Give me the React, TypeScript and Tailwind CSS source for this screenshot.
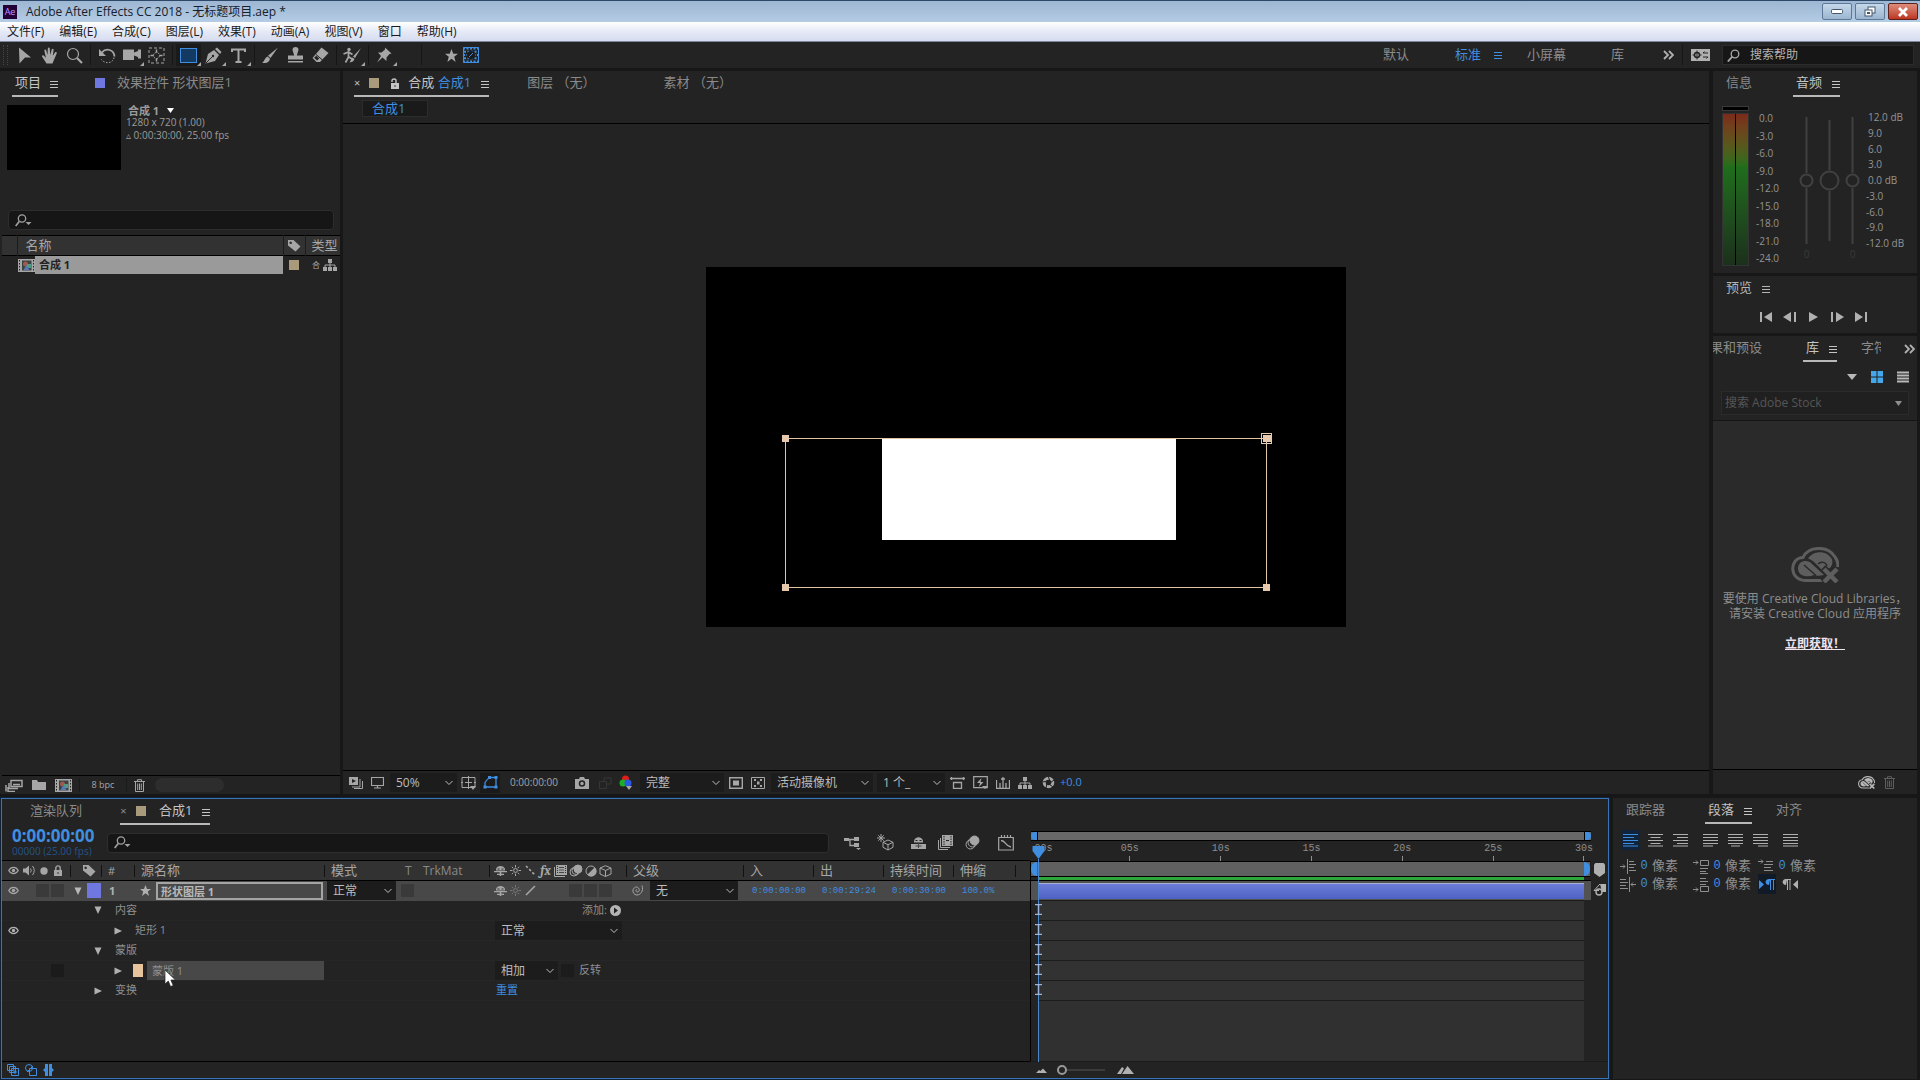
import { ReactNode, useState } from 'react';
import { clsx } from 'clsx';

const menus = ['文件(F)', '编辑(E)', '合成(C)', '图层(L)', '效果(T)', '动画(A)', '视图(V)', '窗口', '帮助(H)'];
const meterMarks = ['0.0', '-3.0', '-6.0', '-9.0', '-12.0', '-15.0', '-18.0', '-21.0', '-24.0'];
const gainMarks = ['12.0 dB', '9.0', '6.0', '3.0', '0.0 dB', '-3.0', '-6.0', '-9.0', '-12.0 dB'];
const ruler = ['00s', '05s', '10s', '15s', '20s', '25s', '30s'];

type SvgProps = { w?: number; h?: number; className?: string; children: ReactNode };

function Svg({ w = 16, h = 16, className, children }: SvgProps) {
  return (
    <svg
      width={w}
      height={h}
      viewBox={`0 0 ${w} ${h}`}
      fill="none"
      stroke="currentColor"
      className={clsx('shrink-0', className)}
      aria-hidden="true"
    >
      {children}
    </svg>
  );
}

const Fill = ({ d }: { d: string }) => <path d={d} fill="currentColor" stroke="none" />;

const MenuLines = ({ className }: { className?: string }) => (
  <Svg w={8} h={9} className={className}>
    <path d="M0 1.500h8M0 4.500h8M0 7.500h8" />
  </Svg>
);
const Chevron = () => (
  <Svg w={8} h={6}>
    <path d="M0.500 1l3.500 3.500L7.500 1" />
  </Svg>
);
const DoubleChevron = () => (
  <Svg w={11} h={10}>
    <path d="M1 1l4 4-4 4M6 1l4 4-4 4" strokeWidth="1.800" />
  </Svg>
);
const Search = () => (
  <Svg w={17} h={13}>
    <circle cx="7" cy="4.500" r="3.700" strokeWidth="1.300" />
    <path d="M4.400 7.200L0.700 12" strokeWidth="1.700" />
    <Fill d="M10.500 8h6l-3 3z" />
  </Svg>
);
const Eye = () => (
  <Svg w={11} h={9}>
    <path d="M0.800 4.500C3 0.300 8 0.300 10.200 4.500C8 8.700 3 8.700 0.800 4.500z" strokeWidth="1.300" />
    <circle cx="5.500" cy="4.500" r="1.700" fill="currentColor" stroke="none" />
  </Svg>
);
const Tag = () => (
  <Svg w={14} h={13}>
    <Fill d="M1 1h5.500L13.500 7.500L8.500 12.500L1 6.500zM3.600 2.500a1.300 1.300 0 1 0 0.100 0z" />
  </Svg>
);
const Flow = () => (
  <Svg w={14} h={12}>
    <Fill d="M5 0h4v4H5zM0 8h4v4H0zM5 8h4v4H5zM10 8h4v4h-4z" />
    <path d="M7 4v4M2 8V6h10v2" />
  </Svg>
);
const Trash = () => (
  <Svg w={11} h={13}>
    <path d="M0 2.500h11M3.500 2.500V0.700h4v1.800M1.500 3v9.500h8V3M3.700 4.500v6.500M5.500 4.500v6.500M7.300 4.500v6.500" />
  </Svg>
);
const Shy = () => (
  <Svg w={13} h={11}>
    <Fill d="M2 5.500V4C3 0 10 0 11 4v1.500zM0 6h13v1.300H0zM5.700 7h1.600v4H5.700zM3 8.700h7V10H3z" />
    <path d="M3.500 4h2M7.500 4h2" stroke="#333" />
  </Svg>
);
const Sun = () => (
  <Svg w={11} h={11}>
    <circle cx="5.500" cy="5.500" r="1.900" />
    <path d="M5.500 0v2.500M5.500 8.500V11M0 5.500h2.500M8.500 5.500H11M1.800 1.800l1.500 1.500M7.700 7.700l1.500 1.500M9.200 1.800L7.700 3.300M3.300 7.700L1.800 9.200" />
  </Svg>
);
const Film = () => (
  <Svg w={13} h={12}>
    <path d="M0.500 2v9.500H11" />
    <Fill d="M2 0h11v10H2z" />
    <path d="M3.500 1v8M11.500 1v8" stroke="#333" strokeDasharray="1 1" />
    <path d="M5 2.500h5M5 7.500h5" stroke="#444" />
    <path d="M5 5h5" stroke="#555" />
  </Svg>
);
const Blur = () => (
  <Svg w={14} h={13}>
    <circle cx="5" cy="8" r="4" />
    <circle cx="7" cy="6.500" r="4" />
    <circle cx="9" cy="5" r="4" fill="currentColor" />
  </Svg>
);
const Half = () => (
  <Svg w={12} h={12}>
    <circle cx="6" cy="6" r="5" />
    <Fill d="M9.500 2.500A5 5 0 1 1 2.500 9.500z" />
  </Svg>
);
const Cube = () => (
  <Svg w={13} h={12}>
    <path d="M6.500 0.700L12 3v6l-5.500 2.500L1 9V3zM1 3l5.500 2.500L12 3M6.500 5.500v6" />
  </Svg>
);
const Star = ({ size = 11 }: { size?: number }) => (
  <svg width={size} height={size} viewBox="0 0 11 11" className="shrink-0" fill="currentColor" aria-hidden="true">
    <path d="M5.500 0l1.500 4h4L7.800 6.500L9 11L5.500 8.200L2 11l1.200-4.500L0 4h4z" />
  </svg>
);
const Lock = ({ open }: { open?: boolean }) => (
  <Svg w={10} h={11}>
    <Fill d="M1 5h8v6H1z" />
    <path d={open ? 'M2 4V2.500c0-2 4-2 4 0V5' : 'M2.800 5V3c0-2.800 4.400-2.800 4.400 0v2'} strokeWidth="1.400" />
    <path d="M5 7v2" stroke="#333" />
  </Svg>
);
const CompIcon = () => (
  <Svg w={17} h={13}>
    <Fill d="M0 0h17v13H0z" />
    <path d="M1.500 1v11M15.500 1v11" stroke="#232323" strokeDasharray="1.500 1.500" />
    <path d="M4 1.500h9.500v10H4z" fill="#3c4244" stroke="none" />
    <circle cx="7.500" cy="5" r="2.500" fill="#a05a4c" stroke="none" />
    <path d="M9 5h4v4H9z" fill="#4f9a82" stroke="none" />
    <path d="M5.500 11l3-5l3 5z" fill="#5878b8" stroke="none" />
  </Svg>
);
const CreativeCloud = ({ w = 48, h = 36 }: { w?: number; h?: number }) => (
  <svg width={w} height={h} viewBox="0 0 48 36" fill="none" stroke="currentColor" aria-hidden="true">
    <path d="M31 33.500H14C-2 33-2 11 12 10.500C17-1 37-2 44 10c3 4 3 8 2.500 10" strokeWidth="3" />
    <path d="M7 21.500c0-8 10-9.500 14-4.500L33 28c-4 1-8 1-10 0c-7 3-16 1-16-6.500z" fill="currentColor" stroke="none" />
    <path d="M17 11.500c6-9 20-8 24 1c1 3 0 7-3 9l-4-3l-4 5l-8-8.500c-2-2-3-3-5-3.500z" fill="currentColor" stroke="none" />
    <path d="M13 18l12 10.500" stroke="#2a2a2a" strokeWidth="1.500" />
    <path d="M17 13c3 0 5 2 7 4l8 8M27 17c3-3 8-2 9 2" stroke="#2a2a2a" strokeWidth="1.500" />
    <path d="M32 21l14 14M46 21L32 35" stroke="#2a2a2a" strokeWidth="7" />
    <path d="M33 22l13 13M46 22L33 35" strokeWidth="4.500" />
  </svg>
);
const Twirl = ({ open }: { open?: boolean }) => (
  <Svg w={8} h={8}>
    <Fill d={open ? 'M0.500 0.500h7L4 8z' : 'M0.500 0.500L8 4L0.500 7.500z'} />
  </Svg>
);

function IconButton({ label, className, children }: { label: string; className?: string; children: ReactNode }) {
  return (
    <button aria-label={label} title={label} className={clsx('flex shrink-0 items-center justify-center', className)}>
      {children}
    </button>
  );
}

function Tab({ active, className, children }: { active?: boolean; className?: string; children: ReactNode }) {
  return (
    <button
      className={clsx(
        'flex h-[26px] shrink-0 items-center border-b-2 whitespace-nowrap text-[13px]',
        active ? 'border-[#b8b8b8] text-[#c4c4c4]' : 'border-transparent text-[#8a8a8a]',
        className,
      )}
    >
      {children}
    </button>
  );
}

function Select({ label, value, className }: { label: string; value: string; className?: string }) {
  return (
    <span className={clsx('relative flex h-[19px] items-center bg-[#1c1c1c] text-[#bdbdbd]', className)}>
      <select aria-label={label} defaultValue={value} className="h-full w-full appearance-none bg-transparent pl-[6px] text-[12px] outline-none">
        <option>{value}</option>
      </select>
      <span className="pointer-events-none absolute right-1">
        <Chevron />
      </span>
    </span>
  );
}

const toolGroups: { name: string; icon: ReactNode; more?: boolean; active?: boolean }[][] = [
  [
    { name: '选取工具', icon: <Svg w={17} h={17}><Fill d="M3 0.500l12 10H9L3.500 16.500z" /></Svg> },
    {
      name: '手形工具',
      icon: (
        <Svg w={17} h={17}>
          <Fill d="M5.500 16.500L1 9.500c0-1.500 1.500-1.500 2.300-0.500L5 11L3.300 3.500c0-1.400 1.500-1.500 1.900-0.200L6.500 8L6.800 1.500c0.200-1.300 1.800-1.300 2 0L9.200 8l1.500-5.500c0.500-1.200 2-0.800 1.900 0.400L11.800 8.800l2.200-3.300c0.800-1 2.200-0.200 1.700 1L12.500 14l-1 2.500z" />
        </Svg>
      ),
    },
    { name: '缩放工具', icon: <Svg w={17} h={17}><circle cx="7" cy="7" r="5.500" strokeWidth="1.200" /><path d="M11 11l5 5" strokeWidth="2.200" /></Svg> },
  ],
  [
    {
      name: '旋转工具',
      icon: (
        <Svg w={18} h={17}>
          <path d="M4 5.500c4-5 12-3 12.500 4" strokeWidth="1.800" />
          <path d="M16 10.500c-1 6-9 7-12.500 2" strokeDasharray="1.500 1.500" />
          <Fill d="M1 2v7h7z" />
        </Svg>
      ),
    },
    { name: '摄像机工具', more: true, icon: <Svg w={18} h={14}><Fill d="M0 1.500h11v3l4-1.500V1.500h3v9h-3V9l-4-1.500V12H0z" /></Svg> },
    {
      name: '锚点工具',
      icon: (
        <Svg w={17} h={17}>
          <rect x="1" y="1" width="15" height="15" strokeDasharray="3 2" />
          <circle cx="8.500" cy="8.500" r="3" strokeDasharray="2 1" />
          <path d="M8.500 2.500v3M8.500 11.500v3M2.500 8.500h3M11.500 8.500h3" strokeWidth="1.500" />
        </Svg>
      ),
    },
  ],
  [
    { name: '矩形工具', more: true, active: true, icon: <Svg w={17} h={15}><rect x="0.500" y="0.500" width="16" height="14" fill="#133a63" stroke="#3f8ee0" /></Svg> },
    {
      name: '钢笔工具',
      more: true,
      icon: (
        <Svg w={17} h={17}>
          <Fill d="M0.500 16.500L3 7l6-4l5 5l-4 6z" />
          <Fill d="M10 2l2-1.500l4.500 4.500L15 7z" />
          <path d="M1 16l6-6" stroke="#232323" />
          <circle cx="8" cy="9" r="1.200" fill="#232323" stroke="none" />
        </Svg>
      ),
    },
    { name: '文字工具', more: true, icon: <Svg w={15} h={15}><path d="M1 4V1.500h13V4M7.500 1.500V14M4.500 14h6" strokeWidth="2" /></Svg> },
  ],
  [
    { name: '画笔工具', icon: <Svg w={17} h={17}><Fill d="M16 0.500L8.500 11L6 8.800z" /><Fill d="M5.500 9.500l2.500 2.200c-1 4-4 4.500-8 4.300c2-1 2.500-5 5.500-6.500z" /></Svg> },
    { name: '仿制图章工具', icon: <Svg w={17} h={16}><Fill d="M5.500 3a3 3 0 0 1 6 0L9.800 8.500H16v4H1v-4h6.200zM1 14h15v1.500H1z" /></Svg> },
    { name: '橡皮擦工具', icon: <Svg w={17} h={17}><Fill d="M9.500 0.500l7 5.500L8 15H4.500L0.500 11z" /><path d="M4 7.500l6.500 5.500" stroke="#232323" /><path d="M2.200 10.800l3 2.800l2-2.200l-3-2.700z" fill="#232323" stroke="none" /></Svg> },
  ],
  [
    {
      name: 'Roto 笔刷工具',
      more: true,
      icon: (
        <Svg w={19} h={17}>
          <circle cx="6" cy="2.500" r="1.700" fill="currentColor" stroke="none" />
          <path d="M0.500 7l5-2l4 2.500M5.500 5v5l-3 5.500M6 10l3 2" strokeWidth="1.700" />
          <Fill d="M18 1L12 11l-2-1.500zM9.500 10.500l2 1.500c-1 3-3 3.500-5 3.200c1.200-1 1.500-3.500 3-4.700z" />
        </Svg>
      ),
    },
  ],
  [{ name: '操控点工具', more: true, icon: <Svg w={17} h={17}><Fill d="M9 0.500l6.500 6l-2 0.500l-3 3.500V14L6.500 10.500L1 15.500L5 9L2 5.500h3.500L9 2.500z" /></Svg> }],
];

function Toolbar() {
  return (
    <div className="flex h-[26px] shrink-0 items-center bg-[#232323] text-[#a6a6a6]">
      <span className="ml-[3px] mr-1 h-5 w-[5px] border-x border-dotted border-[#444]" />
      {toolGroups.map((group, i) => (
        <div key={i} className="flex items-center">
          {i > 0 ? <span className="mx-[3px] h-5 w-px bg-[#161616]" /> : null}
          {group.map((tool) => (
            <IconButton key={tool.name} label={tool.name} className={clsx('relative h-[22px] w-[25px]', tool.active && 'bg-[#1a1a1a]')}>
              {tool.icon}
              {tool.more ? <span className="absolute right-0 bottom-0"><Svg w={4} h={4}><Fill d="M4 0v4H0z" /></Svg></span> : null}
            </IconButton>
          ))}
        </div>
      ))}
      <span className="ml-[24px] h-5 w-px bg-[#161616]" />
      <IconButton label="形状" className="ml-[22px] w-[14px]"><Star size={13} /></IconButton>
      <IconButton label="蒙版" className="ml-[5px] text-[#3f8ee0]">
        <Svg w={16} h={16}>
          <path d="M0 1.500h16M0 8h16M0 14.500h16" strokeWidth="2" strokeDasharray="2 1.500" />
          <path d="M1 4.800h14M1 11.300h14" strokeWidth="2" strokeDasharray="2 1.500" />
          <path d="M0.500 0.500h15v15H0.500z" />
          <circle cx="8" cy="8" r="4" fill="#1b1b1b" stroke="none" />
          <path d="M6 10l4-4" />
        </Svg>
      </IconButton>
      <div className="ml-auto flex items-center text-[13px] text-[#8c8c8c]">
        <button className="w-[72px] text-left">默认</button>
        <button className="flex w-[72px] items-center gap-[13px] text-[#3f8ee0]">标准<MenuLines /></button>
        <button className="w-[84px] text-left">小屏幕</button>
        <button className="w-[52px] text-left">库</button>
        <IconButton label="更多工作区" className="text-[#b0b0b0]"><DoubleChevron /></IconButton>
        <span className="mx-2 h-5 w-px bg-[#161616]" />
        <IconButton label="同步设置" className="text-[#b0b0b0]">
          <Svg w={19} h={12}>
            <Fill d="M0 0h19v12H0z" />
            <circle cx="6" cy="6" r="2.500" stroke="#232323" strokeWidth="1.500" />
            <path d="M6 1.500v9M1.500 6h2M8.500 6h2M12 4h5M12 8h5M13.500 2.500L12 4M15.500 9.500L17 8" stroke="#232323" />
          </Svg>
        </IconButton>
        <label className="mr-[6px] ml-[12px] flex h-5 w-[192px] items-center gap-[10px] border border-[#2c2c2c] bg-[#161616] pl-1 text-[#a8a8a8]">
          <Svg w={13} h={13}>
            <circle cx="8" cy="5" r="3.800" strokeWidth="1.300" />
            <path d="M5.300 7.700L0.800 12.500" strokeWidth="1.800" />
          </Svg>
          <input placeholder="搜索帮助" className="w-full bg-transparent text-[12px] outline-none placeholder:text-[#b4b4b4]" />
        </label>
      </div>
    </div>
  );
}

function ProjectPanel() {
  return (
    <section className="flex w-[340px] shrink-0 flex-col bg-[#232323] pl-[2px]">
      <div className="flex pl-[10px]">
        <Tab active className="gap-[9px] pl-[3px]">项目<MenuLines className="mt-[3px]" /></Tab>
        <Tab className="ml-[37px] gap-3"><span className="h-[10px] w-[10px] bg-[#6e78e0]" />效果控件 形状图层1</Tab>
      </div>
      <div className="mt-2 flex gap-[5px] pl-[5px] text-[10px] leading-[13px] text-[#9c9c9c]">
        <div className="h-[65px] w-[114px] bg-black" />
        <div>
          <p className="flex items-center gap-2 pl-[2px] text-[11px] leading-[11px] font-bold">合成 1<Svg w={7} h={5} className="text-white"><Fill d="M0 0h7L3.500 5z" /></Svg></p>
          <p>1280 x 720 (1.00)</p>
          <p>▵ 0:00:30:00, 25.00 fps</p>
        </div>
      </div>
      <label className="mx-[6px] mt-10 flex h-5 items-center rounded-sm border border-[#2e2e2e] bg-[#161616] pl-[6px] text-[#a0a0a0]">
        <Search />
        <input aria-label="搜索项目" className="w-full bg-transparent px-1 text-[12px] outline-none" />
      </label>
      <table className="mt-[5px] w-full table-fixed border-collapse text-[13px] text-[#a6a6a6]">
        <colgroup><col className="w-[15px]" /><col /><col className="w-[22px]" /><col className="w-[35px]" /></colgroup>
        <thead>
          <tr className="h-5 border-y border-black bg-[#323232]">
            <th className="p-0" />
            <th className="border-l border-[#1c1c1c] p-0 pl-[8px] text-left leading-[17px] font-normal">名称</th>
            <th className="border-x border-[#1c1c1c] p-0"><span className="flex justify-center"><Tag /></span></th>
            <th className="p-0 pl-[6px] text-left leading-[17px] font-normal whitespace-nowrap">类型</th>
          </tr>
        </thead>
        <tbody>
          <tr className="h-[19px]">
            <td className="p-0" />
            <td className="p-0">
              <span className="flex items-center pl-px">
                <CompIcon />
                <span className="flex-1 bg-[#9a9a9a] pl-1 text-[11px] leading-[18px] font-bold text-[#222]">合成 1</span>
              </span>
            </td>
            <td className="p-0"><span className="mx-auto block h-[10px] w-[10px] bg-[#a89a7a]" /></td>
            <td className="p-0">
              <span className="flex items-center justify-end gap-[3px] pr-[3px]">
                <span className="text-[8px] leading-[16px]">合</span>
                <Flow />
              </span>
            </td>
          </tr>
        </tbody>
      </table>
      <div className="mt-auto flex h-[19px] items-center border-t border-black pl-[3px] text-[#a6a6a6]">
        <IconButton label="解释素材"><Svg w={18} h={13}><path d="M6 1.500h11v6H6zM8 5.500h7M4 4v5.500h9M1 6v6.500M3 8v4.500h7" strokeWidth="1.500" /></Svg></IconButton>
        <IconButton label="新建文件夹" className="ml-[9px]"><Svg w={14} h={12}><Fill d="M0 1h5l1 2h8v8H0z" /></Svg></IconButton>
        <IconButton label="新建合成" className="ml-[9px]"><CompIcon /></IconButton>
        <button className="mx-[7px] w-[48px] border-x border-[#1a1a1a] text-center text-[9px] leading-[14px]">8 bpc</button>
        <IconButton label="删除"><Trash /></IconButton>
        <span className="ml-[10px] h-[14px] w-[69px] rounded-full bg-[#2d2d2d]" />
      </div>
    </section>
  );
}

function Composition() {
  return (
    <svg width="640" height="360" viewBox="0 0 640 360" fill="none" role="img" aria-label="合成 1">
      <rect width="640" height="360" fill="#000" />
      <rect x="176" y="172" width="294" height="101" fill="#fff" />
      <rect x="79.500" y="171.500" width="481" height="149" stroke="#e0c4a4" />
      <path d="M76 168h7v7h-7zM76 317h7v7h-7zM557 317h7v7h-7zM557 168h8v7h-8z" fill="#e6c8ac" />
      <rect x="555.500" y="166.500" width="10" height="10" stroke="#e6c8ac" />
    </svg>
  );
}

function Viewer() {
  return (
    <section className="flex min-w-0 flex-1 flex-col bg-[#232323]">
      <div className="flex pl-[11px]">
        <Tab active className="text-[#8f8f8f]">
          <span className="text-[11px]">×</span>
          <span className="mr-[11px] ml-[9px] h-[10px] w-[10px] bg-[#a89a7a]" />
          <Lock open />
          <span className="ml-[8px]">合成 <span className="text-[#3f8ee0]">合成1</span></span>
          <MenuLines className="mt-[3px] ml-[10px]" />
        </Tab>
        <Tab className="ml-[38px]">图层 （无）</Tab>
        <Tab className="ml-[68px]">素材 （无）</Tab>
      </div>
      <div className="flex h-[27px] items-center border-b border-black pl-[19px]">
        <button className="mb-1 h-[17px] w-[66px] border border-[#2c2c2c] bg-[#1a1a1a] pl-[9px] text-left text-[13px] leading-[15px] text-[#3f8ee0]">合成1</button>
      </div>
      <div className="flex flex-1 items-center justify-center">
        <Composition />
      </div>
      <div className="flex h-6 shrink-0 items-center border-t border-black pl-[6px] text-[#a6a6a6]">
        <IconButton label="始终预览此视图"><Svg w={14} h={12}><Fill d="M0 0h9v8H0z" /><path d="M11 2v8H3M13.500 4v7.500H5" /><path d="M3 2l4 2-4 2z" fill="#222" stroke="none" /></Svg></IconButton>
        <IconButton label="主查看器" className="ml-2"><Svg w={13} h={12}><path d="M0.500 0.500h12v8H0.500zM3 11h7M6.500 9v2" strokeWidth="1.200" /></Svg></IconButton>
        <Select label="放大率" value="50%" className="ml-[6px] w-[67px]" />
        <IconButton label="网格和参考线" className="ml-[4px]"><Svg w={15} h={14}><path d="M1 1.500h13v10H1zM7.500 0v13M4 6.500h7M0 6.500h2M13 6.500h2" /><Fill d="M9 10h6l-3 4z" /></Svg></IconButton>
        <IconButton label="切换蒙版和形状路径可见性" className="ml-[4px] h-5 w-[20px] bg-[#1a1a1a] text-[#3f8ee0]"><Svg w={15} h={13}><path d="M2 11V6.500C3.500 4 5 2.500 7 1.500h6V11z" strokeWidth="1.300" /><Fill d="M0.500 9.500h3v3h-3zM11.500 9.500h3v3h-3zM11.500 0h3v3h-3zM5 0h3v3H5z" /></Svg></IconButton>
        <button className="ml-[10px] w-[60px] text-left text-[10px]">0:00:00:00</button>
        <IconButton label="拍摄快照" className="ml-[5px]"><Svg w={14} h={12}><Fill d="M0 2h4l1-2h4l1 2h4v10H0z" /><circle cx="7" cy="6.500" r="2.500" stroke="#232323" strokeWidth="1.500" /></Svg></IconButton>
        <IconButton label="显示快照" className="ml-[10px] text-[#363636]"><Svg w={13} h={12}><path d="M0.500 4.500h7v7h-7zM5 4V1h7v6H8" /></Svg></IconButton>
        <IconButton label="显示通道" className="ml-[7px]">
          <Svg w={14} h={15}>
            <circle cx="6.500" cy="4" r="3.500" fill="#e01c1c" stroke="none" />
            <circle cx="4" cy="8" r="3.500" fill="#1cae24" stroke="none" />
            <circle cx="9" cy="8" r="3.500" fill="#2a58e0" stroke="none" />
            <Fill d="M7 11h6l-3 4z" />
          </Svg>
        </IconButton>
        <Select label="分辨率" value="完整" className="ml-[7px] w-[84px]" />
        <IconButton label="目标区域" className="ml-[5px]"><Svg w={14} h={12}><path d="M0.700 0.700h12.600v10.600H0.700z" strokeWidth="1.400" /><Fill d="M4 3.500h6v5H4z" /></Svg></IconButton>
        <IconButton label="切换透明网格" className="ml-2"><Svg w={14} h={12}><path d="M0.500 0.500h13v11H0.500z" /><path d="M3 3h9M3 9h9" strokeWidth="2" strokeDasharray="2 4" /><path d="M6 6h6" strokeWidth="3" strokeDasharray="2.500 5" /></Svg></IconButton>
        <Select label="3D 视图" value="活动摄像机" className="ml-[6px] w-[102px]" />
        <Select label="视图布局" value="1 个_" className="ml-1 w-[68px]" />
        <div className="flex items-center gap-[8px] pl-[5px]">
          <IconButton label="像素长宽比校正"><Svg w={15} h={12}><path d="M0 1.500h15M3.500 5.500h8v6h-8zM1.500 0v3M13.500 0v3" strokeWidth="1.300" /></Svg></IconButton>
          <IconButton label="快速预览"><Svg w={15} h={13}><path d="M0.700 0.700h13.600v11H0.700z" strokeWidth="1.200" /><Fill d="M8.500 2L4 7h3l-1 4l4.500-5h-3zM9 10h6l-3 3z" /></Svg></IconButton>
          <IconButton label="时间轴"><Svg w={14} h={12}><path d="M0.500 3v8.500h13V3M4 6v5M10 6v5M7 0v11M5 2h4" strokeWidth="1.300" /></Svg></IconButton>
          <IconButton label="合成流程图"><Flow /></IconButton>
        </div>
        <IconButton label="重置曝光度" className="ml-[10px]"><Svg w={13} h={13}><circle cx="6.500" cy="6.500" r="4.300" strokeWidth="3" /><path d="M6 0l2 5M12 4L8 7M11 11L7 8M4 12l1-5M1 6l4-1" stroke="#232323" /></Svg></IconButton>
        <button className="ml-[5px] text-[11px] text-[#3f8ee0]">+0.0</button>
      </div>
    </section>
  );
}

function GainSlider({ size }: { size: 'sm' | 'lg' }) {
  return (
    <Svg w={21} h={127} className="text-[#414141]">
      {size === 'lg' ? (
        <>
          <path d="M10.500 3v50M10.500 74v50" strokeWidth="2" />
          <circle cx="10.500" cy="63.500" r="9" strokeWidth="2" />
        </>
      ) : (
        <>
          <path d="M10.500 0v56M10.500 71v56" strokeWidth="2" />
          <circle cx="10.500" cy="63.500" r="6" strokeWidth="2" />
        </>
      )}
    </Svg>
  );
}

function AudioPanel() {
  return (
    <section className="h-[202px] shrink-0 bg-[#232323]">
      <div className="flex pl-[13px]">
        <Tab>信息</Tab>
        <Tab active className="ml-[41px] gap-[10px] pl-[3px]">音频<MenuLines className="mt-[3px]" /></Tab>
      </div>
      <div className="mt-[9px] flex pl-[9px] text-[10px] text-[#949494]">
        <div className="w-[27px]">
          <div className="h-[5px] border border-[#3a3a3a] bg-black" />
          <div className="mt-[2px] flex h-[153px] justify-center border border-[#333] bg-linear-to-b from-[#7c2a1c] via-[#1f6e1c] via-35% to-[#1b301b]">
            <div className="w-px bg-black" />
          </div>
        </div>
        <div className="mt-[5px] ml-[7px] flex h-[154px] w-[24px] flex-col justify-between leading-[14px]">
          {meterMarks.map((m) => <span key={m} className={m === '0.0' ? 'pl-[3px]' : ''}>{m}</span>)}
        </div>
        <div className="mt-[11px] ml-[16px] flex gap-[2px]">
          {(['sm', 'lg', 'sm'] as const).map((size, i) => (
            <div key={i} className="text-center text-[10px] leading-[20px] text-[#3a3a3a]">
              <GainSlider size={size} />
              {size === 'sm' ? '0' : null}
            </div>
          ))}
        </div>
        <div className="mt-1 flex h-[140px] flex-col justify-between leading-[14px] whitespace-nowrap">
          {gainMarks.map((m) => <span key={m} className={clsx('pl-[3px]', !m.startsWith('-') && 'ml-[2px]')}>{m}</span>)}
        </div>
      </div>
    </section>
  );
}

function PreviewPanel() {
  return (
    <section className="h-[57px] shrink-0 bg-[#232323] text-[#b0b0b0]">
      <div className="flex pl-[13px]">
        <Tab className="gap-[10px] text-[#b4b4b4]">预览<MenuLines className="mt-[3px]" /></Tab>
      </div>
      <div className="mt-[10px] flex items-center gap-[11px] pl-[47px]">
        <IconButton label="第一个"><Svg w={12} h={10}><Fill d="M0 0h2v10H0zM12 0v10L4 5z" /></Svg></IconButton>
        <IconButton label="上一帧"><Svg w={13} h={10}><Fill d="M8 0v10L0 5zM11 0h2v10h-2z" /></Svg></IconButton>
        <IconButton label="播放"><Svg w={13} h={10}><Fill d="M2 0l9 5l-9 5z" /></Svg></IconButton>
        <IconButton label="下一帧"><Svg w={13} h={10}><Fill d="M5 0v10l8-5zM0 0h2v10H0z" /></Svg></IconButton>
        <IconButton label="最后一个"><Svg w={12} h={10}><Fill d="M10 0h2v10h-2zM0 0v10l8-5z" /></Svg></IconButton>
      </div>
    </section>
  );
}

function LibraryPanel() {
  return (
    <section className="flex min-h-0 flex-1 flex-col bg-[#232323] text-[#8e8e8e]">
      <div className="flex">
        <Tab className="w-[49px] justify-end overflow-hidden">果和预设</Tab>
        <Tab active className="ml-[41px] gap-[10px] pl-[3px]">库<MenuLines className="mt-[3px]" /></Tab>
        <Tab className="ml-[24px] w-[20px] overflow-hidden">字符</Tab>
        <IconButton label="更多面板" className="ml-auto pr-[2px] text-[#b0b0b0]"><DoubleChevron /></IconButton>
      </div>
      <div className="flex h-[29px] items-center justify-end gap-[14px] pr-[8px] text-[#b8b8b8]">
        <IconButton label="选择库"><Svg w={10} h={6}><Fill d="M0 0h10L5 6z" /></Svg></IconButton>
        <IconButton label="图标视图" className="text-[#45a6ea]"><Svg w={12} h={12}><Fill d="M0 0h5.500v5.500H0zM6.500 0H12v5.500H6.500zM0 6.500h5.500V12H0zM6.500 6.500H12V12H6.500z" /></Svg></IconButton>
        <IconButton label="列表视图"><Svg w={12} h={12}><path d="M0 1.500h12M0 4.500h12M0 7.500h12M0 10.500h12" strokeWidth="2" /></Svg></IconButton>
      </div>
      <label className="mx-2 flex h-6 items-center border border-[#2b2b2b] bg-[#202020] pr-[6px] pl-[3px]">
        <input placeholder="搜索 Adobe Stock" className="w-full min-w-0 bg-transparent text-[12px] outline-none placeholder:text-[#565656]" />
        <Svg w={7} h={5}><Fill d="M0 0h7L3.500 5z" /></Svg>
      </label>
      <div className="mt-[5px] flex flex-1 flex-col items-center border-t border-[#151515] bg-[#2a2a2a] pt-[126px]">
        <span className="text-[#5e5e5e]"><CreativeCloud /></span>
        <p className="mt-2 text-center text-[12px] leading-[15px] whitespace-nowrap">要使用 Creative Cloud Libraries，<br />请安装 Creative Cloud 应用程序</p>
        <a href="#get" className="mt-[14px] text-[12px] font-bold text-[#f0e4f0] underline">立即获取！</a>
      </div>
      <div className="flex h-[25px] items-center justify-end gap-[9px] border-t border-black pr-[22px]">
        <IconButton label="Creative Cloud" className="text-[#b8b8b8]"><CreativeCloud w={17} h={13} /></IconButton>
        <IconButton label="删除" className="text-[#5e5e5e]"><Trash /></IconButton>
      </div>
    </section>
  );
}

function Th({ sep, className, children }: { sep?: boolean; className?: string; children?: ReactNode }) {
  return (
    <th className="p-0 font-normal">
      <span className={clsx('flex items-center', className)}>
        {sep ? <span className="mr-[6px] h-3 w-px shrink-0 bg-[#111]" /> : null}
        {children}
      </span>
    </th>
  );
}

const Slot = ({ children }: { children?: ReactNode }) => <span className="flex w-[15px] shrink-0 justify-center">{children}</span>;
const Box = () => <span className="block h-[13px] w-[13px] bg-[#3a3a3a]" />;

type PropRowProps = { name: string; deep?: boolean; open?: boolean; visible?: boolean; mask?: boolean; children?: ReactNode };

function PropRow({ name, deep, open, visible, mask, children }: PropRowProps) {
  return (
    <tr className="h-5 border-b border-[#262626]">
      <td className="p-0">
        <span className="flex items-center pl-[6px]">
          {visible ? <IconButton label="可见性" className="text-[#b0b0b0]"><Eye /></IconButton> : null}
          {mask ? <span className="ml-[43px] h-[13px] w-[13px] bg-[#1b1b1b]" /> : null}
        </span>
      </td>
      <td colSpan={3} className="p-0">
        <span className={clsx('flex items-center', deep ? 'pl-[44px]' : 'pl-[24px]')}>
          <button aria-label={name} className={clsx('shrink-0 text-[#b0b0b0]', mask ? 'w-[19px]' : 'w-[21px]')}><Twirl open={open} /></button>
          {mask ? (
            <>
              <span className="mr-1 h-[13px] w-[10px] bg-[#e8c49c]" />
              <span className="relative flex-1 bg-[#484848] pl-[5px] leading-[19px]">
                {name}
                <svg width="14" height="19" viewBox="0 0 14 19" className="absolute top-2 left-[17px]" aria-hidden="true">
                  <path d="M1 1v14l3.300-3l2.300 5.500l2.600-1l-2.300-5.500h4.600z" fill="#fff" stroke="#222" strokeWidth="0.700" />
                </svg>
              </span>
            </>
          ) : name}
        </span>
      </td>
      <td colSpan={3} className="p-0" />
      <td className="p-0">{children}</td>
      <td colSpan={6} className="p-0" />
    </tr>
  );
}

function LayerTable() {
  const [layerName, setLayerName] = useState('形状图层 1');

  return (
    <table className="w-full table-fixed border-collapse text-[11px] text-[#8f8f8f]">
      <colgroup>
        <col className="w-[68px]" />
        <col className="w-[31px]" />
        <col className="w-[33px]" />
        <col className="w-[190px]" />
        <col className="w-[75px]" />
        <col className="w-[20px]" />
        <col className="w-[70px]" />
        <col className="w-[137px]" />
        <col className="w-[117px]" />
        <col className="w-[70px]" />
        <col className="w-[70px]" />
        <col className="w-[70px]" />
        <col className="w-[62px]" />
        <col />
      </colgroup>
      <thead>
        <tr className="h-5 border-y border-black bg-[#323232] text-[13px] leading-[17px] text-[#a6a6a6]">
          <Th className="gap-1 pl-[6px]">
            <Eye />
            <Svg w={12} h={11}><Fill d="M0 3.500h2.500L6 0.500v10L2.500 7.500H0z" /><path d="M7.500 3.500q1.500 2 0 4M9.500 1q3.500 4.500 0 9" /></Svg>
            <Svg w={10} h={10}><circle cx="5" cy="5" r="3.700" fill="currentColor" stroke="none" /></Svg>
            <Lock />
          </Th>
          <Th sep><span className="pl-[5px]"><Tag /></span></Th>
          <Th sep className="text-[11px]">#</Th>
          <Th sep>源名称</Th>
          <Th sep>模式</Th>
          <Th className="pl-[6px] text-[12px] text-[#8a8a8a]">T</Th>
          <Th className="pl-1 text-[12px] text-[#8a8a8a]">TrkMat</Th>
          <th className="p-0">
            <span className="flex items-center">
              <span className="mr-[3px] h-3 w-px bg-[#111]" />
              <Slot><Shy /></Slot>
              <Slot><Sun /></Slot>
              <Slot><Svg w={11} h={11}><path d="M1 1l9 9" strokeWidth="1.600" strokeDasharray="2.500 2" /></Svg></Slot>
              <Slot><em className="font-serif text-[13px] leading-[12px]">fx</em></Slot>
              <Slot><Film /></Slot>
              <Slot><Blur /></Slot>
              <Slot><Half /></Slot>
              <Slot><Cube /></Slot>
            </span>
          </th>
          <Th sep>父级</Th>
          <Th sep>入</Th>
          <Th sep>出</Th>
          <Th sep>持续时间</Th>
          <Th sep>伸缩</Th>
          <Th sep />
        </tr>
      </thead>
      <tbody>
        <tr className="h-5 bg-[#484848]">
          <td className="p-0">
            <span className="flex items-center pl-[6px] text-[#a6a6a6]">
              <IconButton label="可见性"><Eye /></IconButton>
              <span className="mr-[2px] ml-[17px]"><Box /></span>
              <Box />
            </span>
          </td>
          <td className="p-0">
            <span className="flex items-center gap-[5px] pl-1 text-[#b8b8b8]"><Twirl open /><span className="h-[15px] w-[15px] bg-[#6e78e0]" /></span>
          </td>
          <td className="p-0 pl-[8px] font-bold text-[#b0b0b0]">1</td>
          <td className="p-0">
            <span className="flex items-center gap-[5px] pr-px pl-[6px] text-[#b0b0b0]">
              <Star />
              <input
                aria-label="图层名称"
                value={layerName}
                onChange={(e) => setLayerName(e.target.value)}
                className="h-[18px] min-w-0 flex-1 border-2 border-[#a4a4a4] bg-transparent pl-[3px] text-[11px] font-bold text-[#b8b8b8] outline-none"
              />
            </span>
          </td>
          <td className="p-0 px-[3px]"><Select label="混合模式" value="正常" /></td>
          <td className="p-0 pl-[2px]"><Box /></td>
          <td className="p-0" />
          <td className="p-0">
            <span className="flex items-center pl-1 text-[#a6a6a6]">
              <Slot><Shy /></Slot>
              <Slot><span className="text-[#777]"><Sun /></span></Slot>
              <Slot><Svg w={11} h={11}><path d="M1 10l9-9" strokeWidth="1.600" /></Svg></Slot>
              <Slot />
              <Slot />
              <Slot><Box /></Slot>
              <Slot><Box /></Slot>
              <Slot><Box /></Slot>
            </span>
          </td>
          <td className="p-0">
            <span className="flex items-center gap-[7px] pr-[5px] pl-[6px] text-[#a6a6a6]">
              <Svg w={11} h={11}><path d="M10 0.500c2 6-2 9.500-5 9.500s-4.500-3-4-5s3-4 5-2.500s1.500 4.500-0.500 4.500s-2-2.500-0.500-2.500" /></Svg>
              <Select label="父级" value="无" className="flex-1" />
            </span>
          </td>
          {['0:00:00:00', '0:00:29:24', '0:00:30:00', '100.0%'].map((v) => (
            <td key={v} className="p-0 pt-[2px] pl-[9px] font-[Liberation_Mono,monospace] text-[9px] text-[#3f8ee0]">{v}</td>
          ))}
          <td className="p-0" />
        </tr>
        <PropRow name="内容" open>
          <span className="flex items-center justify-end gap-[3px] pr-[5px]">
            添加:
            <IconButton label="添加" className="text-[#b4b4b4]"><Svg w={11} h={11}><circle cx="5.500" cy="5.500" r="5.500" fill="currentColor" stroke="none" /><path d="M4 2.500l4 3-4 3z" fill="#222" stroke="none" /></Svg></IconButton>
          </span>
        </PropRow>
        <PropRow name="矩形 1" deep visible><Select label="矩形 1 模式" value="正常" className="ml-[6px] w-[127px]" /></PropRow>
        <PropRow name="蒙版" open />
        <PropRow name="蒙版 1" deep mask>
          <span className="flex items-center pl-[6px]">
            <Select label="蒙版模式" value="相加" className="w-[63px]" />
            <label className="flex items-center gap-[5px] pl-[3px] whitespace-nowrap">
              <input type="checkbox" className="h-[13px] w-[13px] appearance-none bg-[#1c1c1c]" />
              反转
            </label>
          </span>
        </PropRow>
        <PropRow name="变换"><button className="pl-[7px] text-[#3f8ee0]">重置</button></PropRow>
      </tbody>
    </table>
  );
}

function TimeGraph() {
  return (
    <div className="relative flex min-w-0 flex-1 flex-col">
      <div className="flex h-[36px] shrink-0 flex-col pt-[6px]">
        <div className="mr-[17px] ml-px flex h-[10px] border-y border-black bg-[#686868]">
          <span className="w-[7px] rounded-l-md border-r border-black bg-[#3f8ee0]" />
          <span className="ml-auto w-[7px] rounded-r-md border-l border-black bg-[#3f8ee0]" />
        </div>
        <div className="mr-[15px] flex flex-1 justify-between overflow-hidden font-[Liberation_Mono,monospace] text-[10px] text-[#8e8e8e]">
          {ruler.map((t, i) => (
            <span key={t} className={clsx('flex w-[18px] flex-col items-center justify-between leading-[15px]', i === 0 && 'pl-[9px]')}>
              {t}
              {i > 0 ? <i className="h-[5px] w-px bg-[#8e8e8e]" /> : null}
            </span>
          ))}
        </div>
      </div>
      <div className="flex min-h-0 flex-1">
        <div className="flex min-w-0 flex-1 flex-col border-l border-black">
          <div className="mr-px flex h-4 shrink-0 border-y border-black bg-[#606060]">
            <span className="w-[6px] rounded-l-md bg-[#3f8ee0]" />
            <span className="ml-auto w-[6px] rounded-r-md bg-[#3f8ee0]" />
          </div>
          <div className="mr-[7px] ml-2 h-[3px] shrink-0 bg-[#2fa63a]" />
          <div className="h-5 shrink-0 border-t border-black bg-[#525252] pt-[2px] pr-[7px] pl-2">
            <div className="h-[16px] border-t border-[#a9b0d6] bg-linear-to-b from-[#6c7cd8] to-[#4e62c4]" />
          </div>
          {[0, 1, 2, 3, 4].map((row) => (
            <div key={row} className="mr-[7px] ml-2 h-5 shrink-0 border-t border-[#1c1c1c] bg-[#323232]" />
          ))}
          <div className="mr-[7px] ml-2 flex-1 border-t border-[#1c1c1c] bg-[#303030]" />
        </div>
        <div className="flex w-[17px] shrink-0 flex-col items-center gap-[6px] pt-[2px] text-[#b0b0b0]">
          <IconButton label="合成标记"><Svg w={11} h={14}><Fill d="M0 1.500L1.500 0h8L11 1.500V10L5.500 14L0 10z" /></Svg></IconButton>
          <IconButton label="合成按钮"><Svg w={13} h={13}><path d="M7 1L1 7.500h5" /><Fill d="M7 1h6v8H9z" /><circle cx="6" cy="9" r="3" strokeWidth="1.400" /></Svg></IconButton>
        </div>
      </div>
      <div className="flex h-[17px] shrink-0 items-center border-t border-[#1a1a1a] pl-[6px] text-[#b0b0b0]">
        <Svg w={11} h={6}><Fill d="M0 6l3-3l1.500 1L7 1.500L11 6z" /></Svg>
        <input type="range" aria-label="缩放时间" defaultValue={0} className="ml-[10px] h-[2px] w-[48px] appearance-none bg-[#3c3c3c] [&::-webkit-slider-thumb]:h-[10px] [&::-webkit-slider-thumb]:w-[10px] [&::-webkit-slider-thumb]:appearance-none [&::-webkit-slider-thumb]:rounded-full [&::-webkit-slider-thumb]:border-2 [&::-webkit-slider-thumb]:border-[#989898] [&::-webkit-slider-thumb]:bg-[#232323]" />
        <Svg w={17} h={8} className="ml-3"><Fill d="M0 8l5-7l2 1.500L4 8zM5 8l5.500-8L17 8z" /></Svg>
      </div>
      {/* current time indicator */}
      <div className="pointer-events-none absolute top-[20px] bottom-[16px] left-[2px] flex w-[13px] flex-col items-center text-[#3f8ee0]">
        <Svg w={13} h={14}><Fill d="M0.500 1h12v5L6.500 14L0.500 6z" /></Svg>
        <div className="w-px flex-1 bg-[#4a86cc]" />
        <div className="absolute top-[59px] flex flex-col gap-[9px] text-[#9ab4dc]">
          {[0, 1, 2, 3, 4].map((k) => (
            <Svg key={k} w={7} h={11}><path d="M0 0.500h7M0 10.500h7M3.500 0v11" strokeWidth="1.500" /></Svg>
          ))}
        </div>
      </div>
    </div>
  );
}

function Timeline() {
  return (
    <section className="ml-px flex min-w-0 flex-1 flex-col border border-[#3a74b4] bg-[#232323] ring-1 ring-[#0f2238]">
      <div className="flex pl-7">
        <Tab>渲染队列</Tab>
        <Tab active className="ml-[38px]">
          <span className="w-[7px] text-[11px] text-[#8f8f8f]">×</span>
          <span className="mr-[13px] ml-[9px] h-[10px] w-[10px] bg-[#a89a7a]" />
          合成1
          <MenuLines className="mt-[3px] ml-[10px]" />
        </Tab>
      </div>
      <div className="flex min-h-0 flex-1">
        <div className="flex w-[1028px] shrink-0 flex-col">
          <div className="flex h-[35px] shrink-0 items-center pl-[10px]">
            <div className="w-[95px] shrink-0 font-[Noto_Sans,sans-serif] whitespace-nowrap text-[#3f8ee0]">
              <p className="text-[17px] leading-[18px] font-bold">0:00:00:00</p>
              <p className="text-[10px] leading-[13px] text-[#24507e]">00000 (25.00 fps)</p>
            </div>
            <label className="flex h-5 w-[722px] items-center rounded-sm border border-[#2e2e2e] bg-[#161616] pl-[6px] text-[#a0a0a0]">
              <Search />
              <input aria-label="搜索图层" className="w-full bg-transparent px-1 text-[12px] outline-none" />
            </label>
            <div className="flex items-center pl-[15px] text-[#a6a6a6]">
              <IconButton label="合成微型流程图"><Svg w={17} h={14}><path d="M0 3.500h9M6 3.500v6h6M9 3.500h3" strokeWidth="1.300" /><Fill d="M0 2h5v3H0zM10 1h5v4h-5zM10 7h5v4h-5zM12 12h5l-2.500 2z" /></Svg></IconButton>
              <IconButton label="草图 3D" className="ml-4"><Svg w={17} h={17}><path d="M4 0v8M0 4h8M1.300 1.300l5.400 5.400M6.700 1.300L1.300 6.700M11 6l5 2.300v5L11 16l-5-2.700v-5zM6 8.300l5 2.400l5-2.400M11 10.700V16" /></Svg></IconButton>
              <IconButton label="隐藏消隐图层" className="ml-[17px]"><Svg w={15} h={14}><Fill d="M3 6.500V5c1-5 8-5 9 0v1.500zM0 8h15v5H0z" /><path d="M4.500 4.500h2M8.500 4.500h2" stroke="#232323" /><path d="M7.500 7v5M4.500 10h6" stroke="#444" /></Svg></IconButton>
              <IconButton label="帧混合" className="ml-3"><Svg w={15} h={15}><Fill d="M4 0h11v11H4z" /><path d="M2.500 3v9.500H12M0.500 5v9.500H10" /><path d="M6 1v9M13 1v9" stroke="#232323" strokeDasharray="1.500 1" /><path d="M8 5.500h3" stroke="#232323" /></Svg></IconButton>
              <IconButton label="运动模糊" className="ml-3"><Svg w={15} h={15}><circle cx="5.500" cy="9.500" r="4.500" /><circle cx="7.500" cy="7.500" r="4.500" /><circle cx="9.500" cy="5.500" r="4.500" fill="currentColor" /></Svg></IconButton>
              <IconButton label="图表编辑器" className="ml-[18px]"><Svg w={16} h={16}><path d="M0.700 2.500h14.600v12.500H0.700zM3.500 0v3M6.500 0v3M9.500 0v3M12.500 0v3" strokeWidth="1.200" /><path d="M3 5.500c5 0 4 6 10 6.500" strokeWidth="1.300" /></Svg></IconButton>
            </div>
          </div>
          <LayerTable />
          <div className="mt-auto flex h-[17px] shrink-0 items-center gap-[6px] border-t border-black pl-[5px] text-[#3f8ee0]">
            <IconButton label="图层开关"><Svg w={12} h={12}><path d="M0.500 0.500h6v6h-6zM2.500 2.500h6v6h-6zM4.500 4.500h7v7h-7zM8 6v4M6 8h4" /></Svg></IconButton>
            <IconButton label="转换控制"><Svg w={12} h={12}><circle cx="4" cy="4" r="3.500" /><path d="M4.500 4.500h7v7h-7zM2 8l6-6" /></Svg></IconButton>
            <IconButton label="入点出点"><Svg w={11} h={12}><Fill d="M2 0h3v12H2V8L0 6l2-2zM6 0h3v4l2 2l-2 2v4H6z" /></Svg></IconButton>
          </div>
        </div>
        <TimeGraph />
      </div>
    </section>
  );
}

const alignments = [
  { name: '左对齐文本', d: 'M0 1.500h15M0 4.500h11M0 7.500h15M0 10.500h11M0 13h15' },
  { name: '居中对齐文本', d: 'M0 1.500h15M2.500 4.500h10M0 7.500h15M2.500 10.500h10M0 13h15' },
  { name: '右对齐文本', d: 'M0 1.500h15M4 4.500h11M0 7.500h15M4 10.500h11M0 13h15' },
  { name: '最后一行左对齐', d: 'M0 1.500h15M0 4.500h15M0 7.500h15M0 10.500h15M0 13h10' },
  { name: '最后一行居中对齐', d: 'M0 1.500h15M0 4.500h15M0 7.500h15M0 10.500h15M3 13h9' },
  { name: '最后一行右对齐', d: 'M0 1.500h15M0 4.500h15M0 7.500h15M0 10.500h15M5 13h10' },
  { name: '两端对齐', d: 'M0 1.500h15M0 4.500h15M0 7.500h15M0 10.500h15M0 13h15' },
];

function Indent({ d, label, className }: { d: string; label: string; className?: string }) {
  return (
    <button aria-label={label} className={clsx('flex shrink-0 items-center whitespace-nowrap', className)}>
      <Svg w={16} h={15}><path d={d} /></Svg>
      <span className="w-4 text-center font-[Liberation_Mono,monospace] text-[12px] text-[#3f8ee0]">0</span>像素
    </button>
  );
}

function ParagraphPanel() {
  return (
    <section className="w-[304px] shrink-0 bg-[#232323] text-[13px] text-[#8f8f8f]">
      <div className="flex pl-[13px]">
        <Tab>跟踪器</Tab>
        <Tab active className="ml-[40px] gap-[10px] pl-[3px]">段落<MenuLines className="mt-[3px]" /></Tab>
        <Tab className="ml-[24px]">对齐</Tab>
      </div>
      <div className="mt-[6px] flex pl-[8px] text-[#b0b0b0]">
        {alignments.map((a, i) => (
          <IconButton
            key={a.name}
            label={a.name}
            className={clsx('h-5 w-[19px]', i === 0 && 'bg-[#10243c] text-[#3f8ee0]', i === 2 || i === 5 ? 'mr-[11px]' : 'mr-[6px]')}
          >
            <Svg w={15} h={14}><path d={a.d} /></Svg>
          </IconButton>
        ))}
      </div>
      <div className="mt-[7px] flex h-[18px] items-center pl-[7px]">
        <Indent label="缩进左边距" className="w-[73px]" d="M0 7.500h5M3 5.500l2 2l-2 2M7.500 0v15M9 2.500h5M9 5.500h7M9 8.500h5M9 11.500h7" />
        <Indent label="段前添加空格" className="w-[65px]" d="M0 3.500h5M3 1.500l2 2l-2 2M7.500 1.500h8v5h-8zM7 9.500h8M7 12.500h6M7 14.500h8" />
        <Indent label="首行缩进" d="M0 2.500h5M3 0.500l2 2l-2 2M8 2.500h7M6 5.500h9M6 8.500h7M6 11.500h9" />
      </div>
      <div className="flex h-[18px] items-center pl-[7px]">
        <Indent label="缩进右边距" className="w-[73px]" d="M0 2.500h6M0 5.500h8M0 8.500h6M0 11.500h8M9.500 0v15M11 7.500h5M13 5.500l-2 2l2 2" />
        <Indent label="段后添加空格" className="w-[65px]" d="M7 1.500h6M7 4.500h8M7 7.500h6M7.500 9.500h8v5h-8zM0 12.500h5M3 10.500l2 2l-2 2" />
        <IconButton label="从左到右" className="h-5 w-[18px] bg-[#111b28] text-[#3f8ee0]"><Svg w={16} h={13}><Fill d="M0 2l5 4.500L0 11zM10 7C5.500 7 5.500 1 10 1h6v1H11z" /><path d="M11.500 1v11M14.500 1v11" /></Svg></IconButton>
        <IconButton label="从右到左" className="ml-[6px] text-[#b0b0b0]"><Svg w={16} h={13}><Fill d="M16 2l-5 4.500l5 4.500zM4 7C-0.500 7-0.500 1 4 1h5v1H5z" /><path d="M5.500 1v11M8 1v11" /></Svg></IconButton>
      </div>
    </section>
  );
}

export default function App() {
  return (
    <div className="flex h-screen w-full flex-col overflow-hidden bg-[#171717] font-[Open_Sans,Noto_Sans_CJK_SC,sans-serif] select-none">
      <header className="flex h-[22px] shrink-0 items-center border-t border-[#2c4768] bg-linear-to-b from-[#9db6d2] to-[#b4cce4] pr-[2px] pl-[3px] text-[#16202c]">
        <span className="mr-[9px] flex h-[14px] w-[14px] items-center justify-center bg-[#220038] text-[9px] leading-none text-[#c89aff]">Ae</span>
        <h1 className="text-[12px]">Adobe After Effects CC 2018 - 无标题项目.aep *</h1>
        <div className="ml-auto flex gap-[3px] text-[#44566c]">
          <IconButton label="最小化" className="h-[17px] w-[30px] rounded-xs border border-[#5c7896] bg-linear-to-b from-[#c6d8ea] to-[#9cb6d0]"><Svg w={12} h={5}><rect x="0.500" y="0.500" width="11" height="4" rx="1" fill="#fff" /></Svg></IconButton>
          <IconButton label="还原" className="h-[17px] w-[30px] rounded-xs border border-[#5c7896] bg-linear-to-b from-[#c6d8ea] to-[#9cb6d0]"><Svg w={12} h={11}><rect x="4" y="1" width="7" height="6" fill="#fff" /><rect x="1" y="4" width="7" height="6" fill="#fff" /><rect x="3.500" y="6.500" width="2" height="1" /></Svg></IconButton>
          <IconButton label="关闭" className="h-[17px] w-[30px] rounded-xs border border-[#5e2018] bg-linear-to-b from-[#dc8c7c] to-[#bc3420]"><Svg w={12} h={10} className="text-white"><path d="M2 1l8 8M10 1L2 9" strokeWidth="2.800" /></Svg></IconButton>
        </div>
      </header>
      <nav className="flex h-5 shrink-0 items-center gap-[15px] border-b border-[#8088a0] bg-linear-to-b from-white via-[#e6eaf6] to-[#d6dcf0] pl-[7px] text-[12px] text-[#1a1a1a]">
        {menus.map((m) => <button key={m}>{m}</button>)}
      </nav>
      <Toolbar />
      <main className="flex min-h-0 flex-1 gap-[3px] pt-[3px]">
        <ProjectPanel />
        <Viewer />
        <aside className="mr-[3px] ml-[1px] flex w-[204px] shrink-0 flex-col gap-[3px]">
          <AudioPanel />
          <PreviewPanel />
          <LibraryPanel />
        </aside>
      </main>
      <div className="mt-[4px] mb-px flex h-[281px] shrink-0 gap-1 pr-[3px]">
        <Timeline />
        <ParagraphPanel />
      </div>
    </div>
  );
}
